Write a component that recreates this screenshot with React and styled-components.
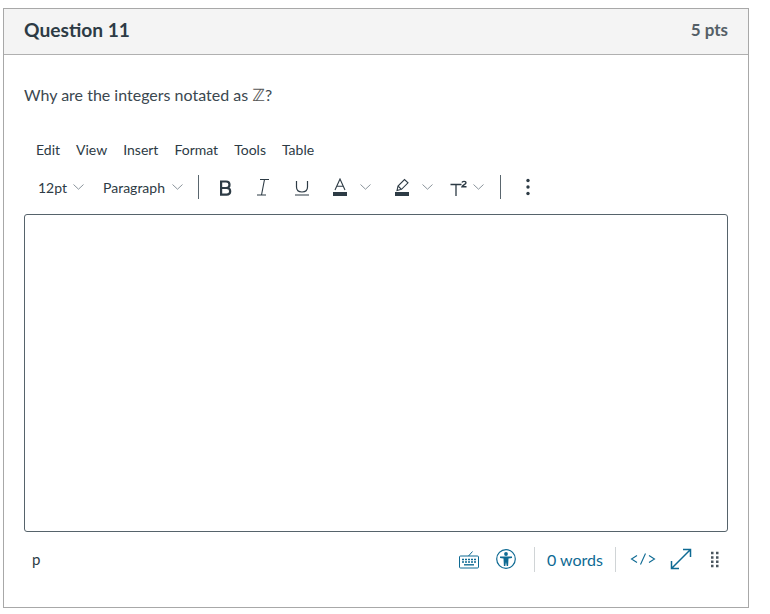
import React from "react";
import styled, { createGlobalStyle } from "styled-components";

const Global = createGlobalStyle`
  html, body { margin: 0; padding: 0; background: #fff; }
  body { font-family: Lato, "Liberation Sans", sans-serif; color: #2d3b45; }
  * { box-sizing: border-box; }
`;

const Page = styled.div`
  width: 770px;
  height: 614px;
  padding: 8px 0 0 3px;
`;

const Card = styled.section`
  width: 746px;
  height: 600px;
  border: 1px solid #a8a8a8;
  display: flex;
  flex-direction: column;
`;

const Header = styled.header`
  height: 46px;
  flex: none;
  background: #f4f4f4;
  border-bottom: 1px solid #b0b0b0;
  display: flex;
  align-items: center;
  justify-content: space-between;
  padding: 0 20px 4px;
`;

const Title = styled.h2`
  margin: 0;
  font-size: 19.2px;
  font-weight: 700;
  color: #2d3b45;
`;

const Points = styled.span`
  font-size: 17px;
  font-weight: 700;
  color: #545f67;
`;

const Body = styled.div`
  flex: 1;
  display: flex;
  flex-direction: column;
  padding: 30px 20px 0;
`;

const Prompt = styled.p`
  margin: 0;
  font-size: 16px;
  line-height: 20px;
  color: #3b4850;
`;

const MathZ = styled.span`
  font-family: "DejaVu Sans", serif;
  font-size: 17px;
  line-height: 1;
  color: #555;
`;

const MenuBar = styled.nav`
  display: flex;
  gap: 16px;
  margin: 34px 0 0 12px;
  height: 20px;
  align-items: center;
  font-size: 14px;
  color: #2d3b45;
`;

const ToolBar = styled.div`
  display: flex;
  align-items: center;
  height: 26px;
  margin: 15px 0 14px 14px;
  color: #2d3b45;
`;

const Select = styled.span`
  display: flex;
  align-items: center;
  gap: ${(p) => p.$gap}px;
  font-size: 14px;
  margin-right: ${(p) => p.$after}px;
`;

const Tool = styled.span`
  display: flex;
  align-items: center;
  margin-right: ${(p) => p.$after}px;
`;

const Bar = styled.span`
  width: 1px;
  height: 24px;
  background: #5a666e;
  margin-right: ${(p) => p.$after}px;
`;

const Editor = styled.div`
  height: 318px;
  flex: none;
  border: 1px solid #56636b;
  border-radius: 3px;
`;

const Status = styled.footer`
  display: flex;
  align-items: center;
  height: 30px;
  margin-top: 12px;
  padding: 0 8px;
  color: #0e6a93;
`;

const Path = styled.span`
  font-size: 15px;
  color: #2d3b45;
  margin-right: auto;
`;

const Words = styled.span`
  font-size: 16px;
  color: #0e6a93;
`;

const Sep = styled.span`
  width: 1px;
  height: 25px;
  background: #d0d4d6;
  margin: 0 ${(p) => p.$right}px 0 ${(p) => p.$left}px;
`;

const Chevron = () => (
  <svg width="11" height="6" viewBox="0 0 11 6" fill="none" stroke="#7d8890" strokeWidth="0.9">
    <path d="M.5.5l5 4.7 5-4.7" />
  </svg>
);

const Icon = ({ w = 20, h = 20, color = "#2d3b45", children }) => (
  <svg width={w} height={h} viewBox={`0 0 ${w} ${h}`} fill="none" stroke={color} style={{ display: "block" }}>
    {children}
  </svg>
);

export default function App() {
  return (
    <Page>
      <Global />
      <Card>
        <Header>
          <Title>Question 11</Title>
          <Points>5 pts</Points>
        </Header>
        <Body>
          <Prompt>
            Why are the integers notated as <MathZ>ℤ</MathZ>?
          </Prompt>
          <MenuBar>
            <span>Edit</span>
            <span>View</span>
            <span>Insert</span>
            <span>Format</span>
            <span>Tools</span>
            <span>Table</span>
          </MenuBar>
          <ToolBar>
            <Select $gap={6} $after={19}>12pt <Chevron /></Select>
            <Select $gap={7} $after={15}>Paragraph <Chevron /></Select>
            <Bar $after={18} />
            <Tool $after={23}>
              <Icon w={16} h={18}>
                <path d="M4.100 3.500h5c2.200 0 3.400 1.100 3.400 3.200 0 2-1.200 3.300-3.400 3.300h-5zM4.100 10h5.500c2.400 0 3.600 1.200 3.600 3.300 0 2.100-1.200 3.300-3.600 3.300H4.100z" strokeWidth="2.200" />
              </Icon>
            </Tool>
            <Tool $after={24}>
              <Icon w={14} h={18}>
                <path d="M4 1.500h9M1 17h9M8.500 1.500L5.500 17" strokeWidth="1.100" />
              </Icon>
            </Tool>
            <Tool $after={22}>
              <Icon w={16} h={18}>
                <path d="M2.500 3v6c0 3.200 2 5 5.500 5s5.500-1.800 5.500-5V3M1 17h14" strokeWidth="1.200" />
              </Icon>
            </Tool>
            <Tool $after={12}>
              <Icon w={16} h={18}>
                <path d="M3 12L8 1l5 11M5 8.200h6" strokeWidth="1.100" />
                <rect x="1" y="14" width="14" height="4" fill="#2d3b45" stroke="none" />
              </Icon>
            </Tool>
            <Tool $after={23}><Chevron /></Tool>
            <Tool $after={12}>
              <Icon w={16} h={18}>
                <path d="M3 12.500l1-4.500 6.500-6.500 3.500 3.300-6.500 6.500-4.500 1.200zM4 8l3.500 3.300" strokeWidth="1.100" />
                <rect x="1" y="14" width="14" height="4" fill="#2d3b45" stroke="none" />
              </Icon>
            </Tool>
            <Tool $after={17}><Chevron /></Tool>
            <Tool $after={5}>
              <Icon w={18} h={18}>
                <path d="M.5 6.500h11M6 6.500V18" strokeWidth="1.300" />
                <path d="M12 4.500c.4-1.500 4-1.500 4 .3 0 1.400-3.300 2-4 3.900h4.500" strokeWidth="1.400" />
              </Icon>
            </Tool>
            <Tool $after={16}><Chevron /></Tool>
            <Bar $after={25} />
            <Tool $after={0}>
              <Icon w={4} h={18}>
                <circle cx="2" cy="2.500" r="1.700" fill="#2d3b45" stroke="none" />
                <circle cx="2" cy="9" r="1.700" fill="#2d3b45" stroke="none" />
                <circle cx="2" cy="15.500" r="1.700" fill="#2d3b45" stroke="none" />
              </Icon>
            </Tool>
          </ToolBar>
          <Editor />
          <Status>
            <Path>p</Path>
            <Tool $after={17}>
              <Icon w={20} h={20} color="#0e6a93">
                <rect x="0.500" y="7" width="19" height="12" rx="1" strokeWidth="1" />
                <path d="M9.500 7l4-4.500" strokeWidth="1" />
                <path d="M3 10.500h14M3 13h14" strokeWidth="1.500" strokeDasharray="2 1" />
                <path d="M5 15.800h10" strokeWidth="1.400" />
              </Icon>
            </Tool>
            <Tool $after={0}>
              <Icon w={20} h={20} color="#0e6a93">
                <circle cx="10" cy="10" r="9.300" strokeWidth="1.200" />
                <circle cx="10" cy="5" r="1.900" fill="#0e6a93" stroke="none" />
                <path d="M4 7.500h12v1.500l-3.500.5-.4 7.500h-1.400L10 13l-.7 4H7.900L7.500 9.500 4 9z" fill="#0e6a93" stroke="none" />
              </Icon>
            </Tool>
            <Sep $left={18} $right={12} />
            <Words>0 words</Words>
            <Sep $left={12} $right={14} />
            <Tool $after={14}>
              <Icon w={26} h={14} color="#0e6a93">
                <path d="M7 3.500L1.500 7 7 10.500M19 3.500L24.500 7 19 10.500M15.500 1.500L10.500 12.500" strokeWidth="1.100" />
              </Icon>
            </Tool>
            <Tool $after={18}>
              <Icon w={22} h={22} color="#0e6a93">
                <path d="M1.500 20.500l19-19M13 1.500h7.500V9M1.500 13v7.500H9" strokeWidth="1.500" />
              </Icon>
            </Tool>
            <Tool $after={0}>
              <Icon w={10} h={18} color="#4a565e">
                {[3, 7.500, 11.700, 16].map((y) => (
                  <path key={y} d={`M1 ${y}h2.500M6 ${y}h2.500`} strokeWidth="2.500" />
                ))}
              </Icon>
            </Tool>
          </Status>
        </Body>
      </Card>
    </Page>
  );
}
